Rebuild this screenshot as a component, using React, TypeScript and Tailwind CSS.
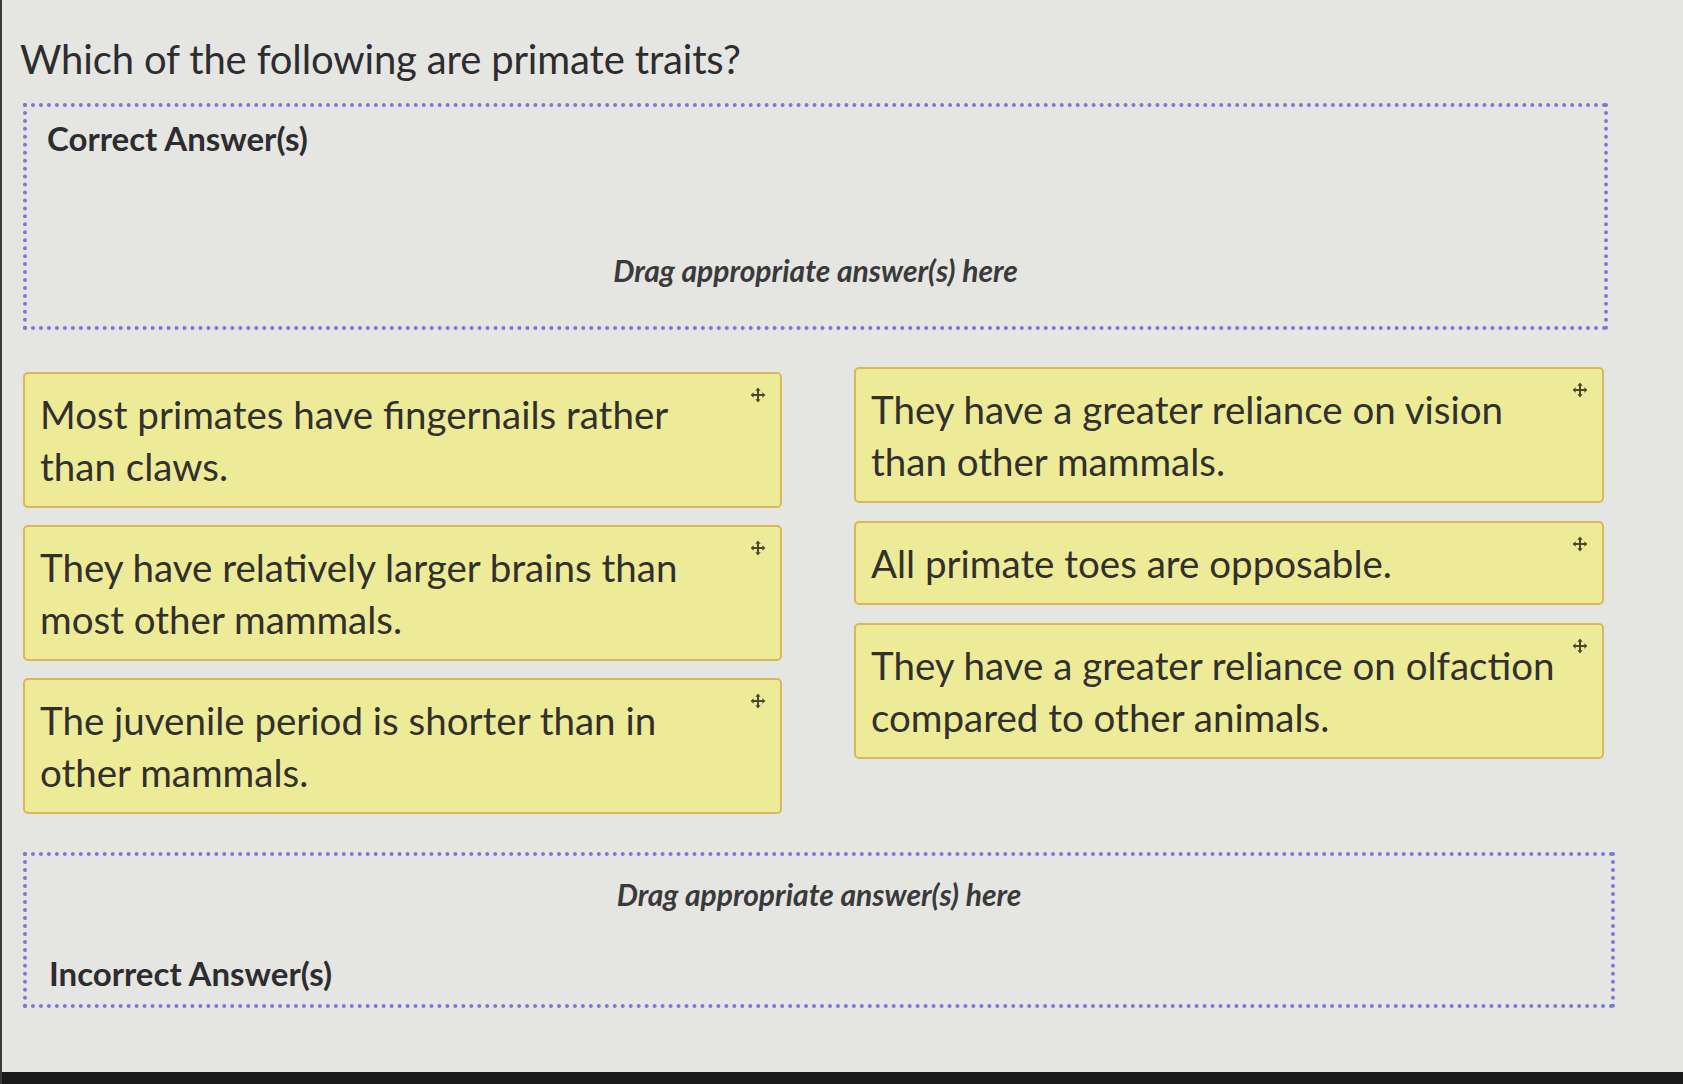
import React from 'react'

const leftCards = [
  ['Most primates have fingernails rather', 'than claws.'],
  ['They have relatively larger brains than', 'most other mammals.'],
  ['The juvenile period is shorter than in', 'other mammals.'],
]

const rightCards = [
  ['They have a greater reliance on vision', 'than other mammals.'],
  ['All primate toes are opposable.'],
  ['They have a greater reliance on olfaction', 'compared to other animals.'],
]

function MoveIcon() {
  return (
    <svg width="16" height="16" viewBox="0 0 14 14" className="absolute top-[13px] right-[14px]">
      <path d="M7 2.5v9M2.5 7h9" stroke="#4a4930" strokeWidth="1.8" />
      <path d="M7 0.5 9.3 3.2H4.7z M7 13.5 9.3 10.8H4.7z M0.5 7 3.2 4.7v4.6z M13.5 7 10.8 4.7v4.6z" fill="#4a4930" />
    </svg>
  )
}

function AnswerCard({ lines }: { lines: string[] }) {
  return (
    <div className="relative rounded-[5px] border-2 border-[#d9b85a] bg-[#eeeb98] pl-[15px] pr-[40px] py-[14px] text-[38.5px] leading-[52px] text-[#32302d]">
      {lines.map((l) => (
        <div key={l} className="whitespace-nowrap">{l}</div>
      ))}
      <MoveIcon />
    </div>
  )
}

export default function App() {
  return (
    <div
      className="flex h-[1084px] w-full flex-col overflow-hidden border-l-2 border-[#3a3a3a] bg-[#e5e5e2] text-[#2d2c2f]"
      style={{ fontFamily: 'Lato, "Open Sans", sans-serif' }}
    >
      <div className="pl-[18px]">
        <h1 className="mt-[35px] text-[40px] leading-[48px] font-normal tracking-[-0.15px]">
          Which of the following are primate traits?
        </h1>

        {/* correct zone */}
        <div className="mt-[20px] ml-[3px] flex h-[227px] w-[1585px] flex-col border-[4px] border-dotted border-[#7a78d8]">
          <div className="pl-[20px] pt-[12px] text-[33px] leading-[38px] font-bold">Correct Answer(s)</div>
          <div className="mt-[95px] text-center text-[30px] leading-[36px] font-bold italic text-[#3a393b]">
            Drag appropriate answer(s) here
          </div>
        </div>

        {/* cards */}
        <div className="mt-[42px] ml-[3px] grid grid-cols-[759px_750px] items-start gap-x-[72px]">
          <div className="flex flex-col gap-[17px]">
            {leftCards.map((c) => (
              <AnswerCard key={c[0]} lines={c} />
            ))}
          </div>
          <div className="mt-[-5px] flex flex-col gap-[18px]">
            {rightCards.map((c) => (
              <AnswerCard key={c[0]} lines={c} />
            ))}
          </div>
        </div>

        {/* incorrect zone */}
        <div className="mt-[38px] ml-[3px] flex h-[156px] w-[1592px] flex-col border-[4px] border-dotted border-[#7a78d8]">
          <div className="pt-[20px] text-center text-[30px] leading-[36px] font-bold italic text-[#3a393b]">
            Drag appropriate answer(s) here
          </div>
          <div className="mt-[42px] pl-[22px] text-[33px] leading-[38px] font-bold">Incorrect Answer(s)</div>
        </div>
      </div>
      <div className="flex-1" />
      <div className="h-[12px] bg-[#1a1a1a]" />
    </div>
  )
}
